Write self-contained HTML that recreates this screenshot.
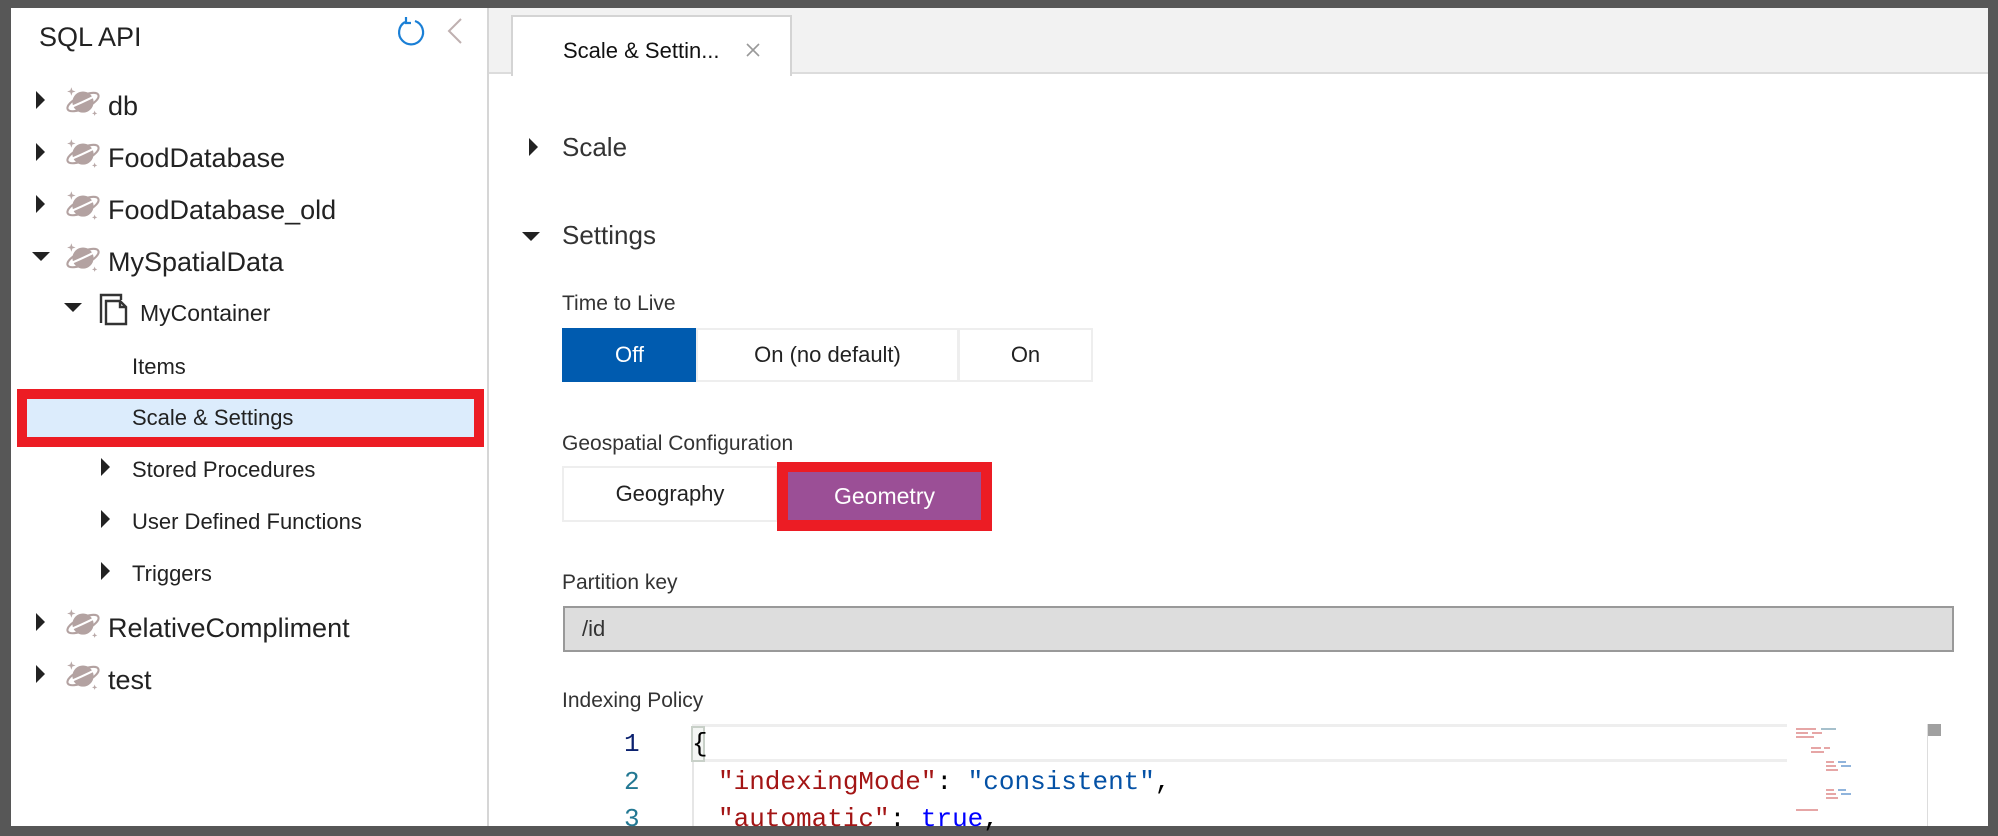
<!DOCTYPE html>
<html><head><meta charset="utf-8">
<style>
*{margin:0;padding:0;box-sizing:border-box}
body{width:1998px;height:836px;background:#575757;position:relative;overflow:hidden;font-family:"Liberation Sans",sans-serif;color:#333}
.abs{position:absolute}
#side{left:11px;top:8px;width:477px;height:818px;background:#fff}
#div{left:487px;top:8px;width:2px;height:818px;background:#d6d6d6}
#main{left:489px;top:8px;width:1499px;height:818px;background:#fff}
#tabbar{left:489px;top:8px;width:1499px;height:66px;background:#f2f2f2;border-bottom:2px solid #dcdcdc}
#tab{left:511px;top:15px;width:281px;height:61px;background:#fff;border:2px solid #d4d4d4;border-bottom:none}
.t{position:absolute;white-space:nowrap;line-height:1}
.tri-r{position:absolute;width:0;height:0;border-top:9px solid transparent;border-bottom:9px solid transparent;border-left:9px solid #222}
.tri-d{position:absolute;width:0;height:0;border-left:9px solid transparent;border-right:9px solid transparent;border-top:9px solid #222}
.btn{position:absolute;background:#fff;border:2px solid #eee;font-size:22px;text-align:center;color:#222}
.code{font-family:"Liberation Mono",monospace;font-size:26px}
</style></head><body>
<div id="side" class="abs"></div>
<div id="main" class="abs"></div>
<div id="div" class="abs"></div>
<div id="tabbar" class="abs"></div>
<div id="tab" class="abs"></div>

<div class="t" style="left:39px;top:24px;font-size:27px;color:#222">SQL API</div>
<svg class="abs" style="left:395px;top:16px" width="32" height="32" viewBox="0 0 32 32"><path d="M10 6 A12 12 0 1 0 20 5" fill="none" stroke="#1a7fd6" stroke-width="2.2"/><path d="M11 1 L11 7 L16 7" fill="none" stroke="#1a7fd6" stroke-width="2.2"/></svg>
<svg class="abs" style="left:446px;top:18px" width="18" height="27"><path d="M15 1 L3 13 L15 25" fill="none" stroke="#bfb0b0" stroke-width="2"/></svg>

<svg width="0" height="0" style="position:absolute"><defs><symbol id="pl" viewBox="0 0 34 30"><path d="M6 2 L7 5 L10 6 L7 7 L6 10 L5 7 L2 6 L5 5Z" fill="#b9a9a8"/><path d="M28 24 L28.7 26 L30.5 26.7 L28.7 27.4 L28 29 L27.3 27.4 L25.5 26.7 L27.3 26Z" fill="#b9a9a8"/><circle cx="17" cy="16" r="10" fill="#b3a2a1"/><ellipse cx="17" cy="16" rx="16" ry="6" transform="rotate(-25 17 16)" fill="none" stroke="#b3a2a1" stroke-width="2"/><path d="M5 21 Q15 17 29 10" stroke="#fff" stroke-width="2" fill="none"/></symbol></defs></svg>

<div class="tri-r" style="left:36px;top:91px"></div>
<svg class="abs" style="left:65px;top:85px" width="36" height="32"><use href="#pl"/></svg>
<div class="t" style="left:108px;top:93px;font-size:27px;color:#222">db</div>

<div class="tri-r" style="left:36px;top:143px"></div>
<svg class="abs" style="left:65px;top:137px" width="36" height="32"><use href="#pl"/></svg>
<div class="t" style="left:108px;top:145px;font-size:27px;color:#222">FoodDatabase</div>

<div class="tri-r" style="left:36px;top:195px"></div>
<svg class="abs" style="left:65px;top:189px" width="36" height="32"><use href="#pl"/></svg>
<div class="t" style="left:108px;top:197px;font-size:27px;color:#222">FoodDatabase_old</div>

<div class="tri-d" style="left:32px;top:252px"></div>
<svg class="abs" style="left:65px;top:241px" width="36" height="32"><use href="#pl"/></svg>
<div class="t" style="left:108px;top:249px;font-size:27px;color:#222">MySpatialData</div>

<div class="tri-d" style="left:64px;top:303px"></div>
<svg class="abs" style="left:99px;top:293px" width="31" height="34"><path d="M2 30 L2 2 L22 2 L22 7" fill="none" stroke="#333" stroke-width="2.4"/><path d="M7 31 L7 8 L21 8 L27 14 L27 31 Z M21 8 L21 14 L27 14" fill="none" stroke="#333" stroke-width="2.4"/></svg>
<div class="t" style="left:140px;top:302px;font-size:23px;color:#222">MyContainer</div>

<div class="t" style="left:132px;top:356px;font-size:22px;color:#222">Items</div>

<div class="abs" style="left:17px;top:389px;width:467px;height:58px;border:10px solid #ec1c24;background:#dcecfc"></div>
<div class="t" style="left:132px;top:407px;font-size:22px;color:#222">Scale &amp; Settings</div>

<div class="tri-r" style="left:101px;top:458px"></div>
<div class="t" style="left:132px;top:459px;font-size:22px;color:#222">Stored Procedures</div>
<div class="tri-r" style="left:101px;top:510px"></div>
<div class="t" style="left:132px;top:511px;font-size:22px;color:#222">User Defined Functions</div>
<div class="tri-r" style="left:101px;top:562px"></div>
<div class="t" style="left:132px;top:563px;font-size:22px;color:#222">Triggers</div>

<div class="tri-r" style="left:36px;top:613px"></div>
<svg class="abs" style="left:65px;top:607px" width="36" height="32"><use href="#pl"/></svg>
<div class="t" style="left:108px;top:615px;font-size:27px;color:#222">RelativeCompliment</div>

<div class="tri-r" style="left:36px;top:665px"></div>
<svg class="abs" style="left:65px;top:659px" width="36" height="32"><use href="#pl"/></svg>
<div class="t" style="left:108px;top:667px;font-size:27px;color:#222">test</div>

<div class="t" style="left:563px;top:40px;font-size:22px;color:#111">Scale &amp; Settin...</div>
<svg class="abs" style="left:746px;top:43px" width="14" height="14"><path d="M1 1 L13 13 M13 1 L1 13" stroke="#999" stroke-width="1.6"/></svg>

<div class="tri-r" style="left:529px;top:138px"></div>
<div class="t" style="left:562px;top:134px;font-size:26px;color:#333">Scale</div>
<div class="tri-d" style="left:522px;top:232px"></div>
<div class="t" style="left:562px;top:222px;font-size:26px;color:#333">Settings</div>

<div class="t" style="left:562px;top:293px;font-size:21px;color:#333">Time to Live</div>
<div class="btn" style="left:562px;top:328px;width:135px;height:54px;background:#005baf;border-color:#005baf;color:#fff;line-height:50px">Off</div>
<div class="btn" style="left:696px;top:328px;width:263px;height:54px;line-height:50px">On (no default)</div>
<div class="btn" style="left:958px;top:328px;width:135px;height:54px;line-height:50px">On</div>

<div class="t" style="left:562px;top:433px;font-size:21px;color:#333">Geospatial Configuration</div>
<div class="btn" style="left:562px;top:466px;width:216px;height:56px;line-height:52px">Geography</div>
<div class="abs" style="left:777px;top:462px;width:215px;height:69px;background:#ec1c24"></div>
<div class="abs" style="left:788px;top:472px;width:193px;height:48px;background:#9b4f96;color:#fff;font-size:23px;text-align:center;line-height:48px">Geometry</div>

<div class="t" style="left:562px;top:572px;font-size:21px;color:#333">Partition key</div>
<div class="abs" style="left:563px;top:606px;width:1391px;height:46px;background:#ddd;border:2px solid #999"></div>
<div class="t" style="left:582px;top:618px;font-size:22px;color:#333">/id</div>

<div class="t" style="left:562px;top:690px;font-size:21px;color:#333">Indexing Policy</div>

<div class="abs" style="left:692px;top:724px;width:1095px;height:38px;border-top:3px solid #eee;border-bottom:3px solid #eee"></div>
<div class="abs" style="left:692px;top:762px;width:2px;height:64px;background:#e6e6e6"></div>
<div class="abs" style="left:691px;top:726px;width:14px;height:36px;border:2px solid #c8d0c8;background:#f4f6f4"></div>
<div class="t code" style="left:624px;top:731px;color:#0b216f">1</div>
<div class="t code" style="left:624px;top:769px;color:#237893">2</div>
<div class="t code" style="left:624px;top:806px;color:#237893">3</div>
<div class="t code" style="left:692px;top:731px;color:#000">{</div>
<div class="t code" style="left:718px;top:769px"><span style="color:#a31515">"indexingMode"</span><span style="color:#000">: </span><span style="color:#0451a5">"consistent"</span><span style="color:#000">,</span></div>
<div class="t code" style="left:718px;top:806px"><span style="color:#a31515">"automatic"</span><span style="color:#000">: </span><span style="color:#0000ff">true</span><span style="color:#000">,</span></div>

<svg class="abs" style="left:1786px;top:724px" width="90" height="90">
<g stroke-width="1.5">
<path d="M10 5 H30" stroke="#d88"/><path d="M35 5 H50" stroke="#8ab"/>
<path d="M10 9 H22 M26 9 H36" stroke="#d88"/>
<path d="M10 13 H28" stroke="#d88"/>
<path d="M25 24 H35 M38 24 H44" stroke="#d88"/>
<path d="M25 28 H38" stroke="#d88"/>
<path d="M40 38 H48" stroke="#d88"/><path d="M52 38 H60" stroke="#6a9ad0"/>
<path d="M40 42 H50" stroke="#d88"/><path d="M55 42 H65" stroke="#6a9ad0"/>
<path d="M40 46 H52" stroke="#d88"/>
<path d="M40 66 H48" stroke="#d88"/><path d="M52 66 H60" stroke="#6a9ad0"/>
<path d="M40 70 H50" stroke="#d88"/><path d="M55 70 H65" stroke="#6a9ad0"/>
<path d="M40 74 H52" stroke="#d88"/>
<path d="M10 86 H32" stroke="#d88"/>
</g></svg>
<div class="abs" style="left:1927px;top:724px;width:1px;height:102px;background:#ddd"></div>
<div class="abs" style="left:1928px;top:724px;width:13px;height:12px;background:#a0a0a0"></div>
</body></html>
